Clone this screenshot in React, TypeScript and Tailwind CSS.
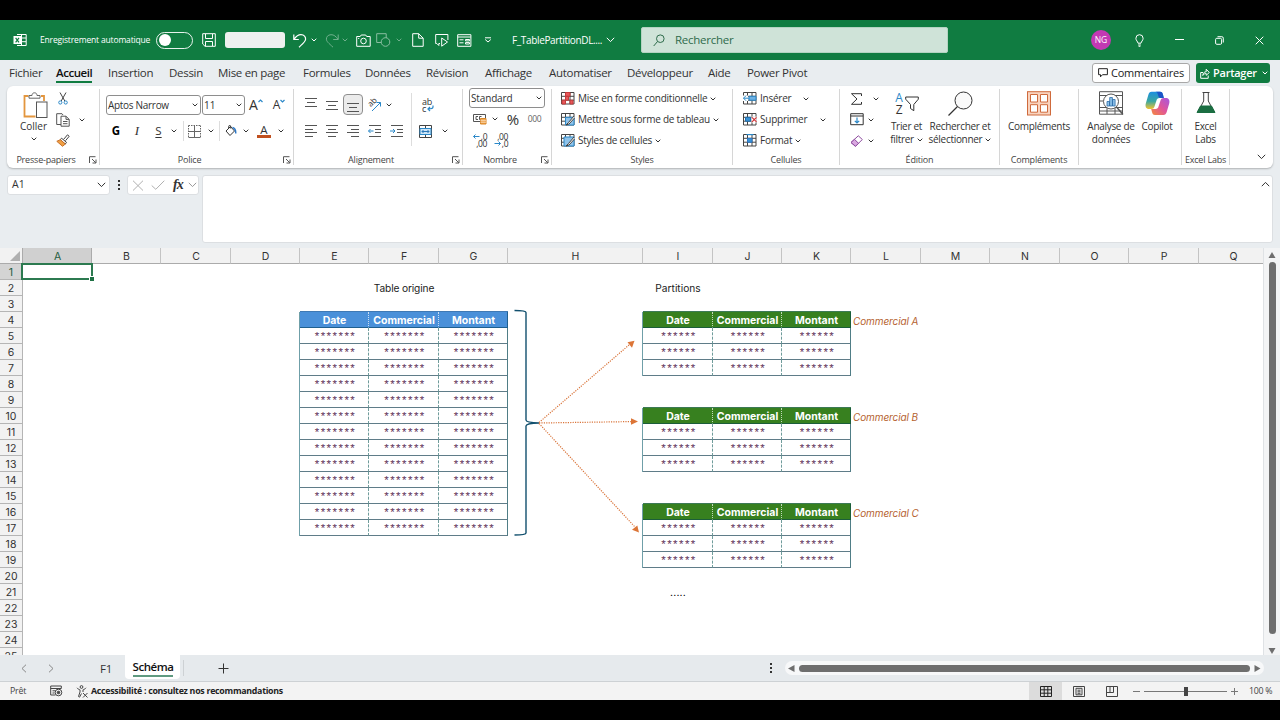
import React from 'react';
import clsx from 'clsx';

type IconProps = { w: number; h: number; className?: string; children: React.ReactNode };

const Icon = ({ w, h, className, children }: IconProps) => (
  <svg
    width={w}
    height={h}
    viewBox={`0 0 ${w} ${h}`}
    fill="none"
    stroke="currentColor"
    strokeWidth="1"
    className={clsx('block shrink-0', className)}
  >
    {children}
  </svg>
);

const Chevron = ({ className }: { className?: string }) => (
  <Icon w={6} h={4} className={className}>
    <path d="M0.7 0.7 3 3 5.3 0.7" />
  </Icon>
);

const BigChevron = ({ className }: { className?: string }) => (
  <Icon w={9} h={6} className={className}>
    <path d="M0.8 0.8 4.5 4.6 8.2 0.8" />
  </Icon>
);

const Slot = ({ className, children }: { className: string; children?: React.ReactNode }) => (
  <div className={clsx('flex shrink-0 items-center justify-center', className)}>{children}</div>
);

/* ---------- Title bar ---------- */

const TitleBar = () => (
  <header className="flex h-10 items-center bg-[#107c41] text-white">
    <Icon w={14} h={14} className="ml-[13px]">
      <path d="M4 1.5h9.2v11H4M8.5 1.5v11M4 5h9M4 8.7h9" />
      <rect x="0.5" y="3" width="7.5" height="8" fill="white" stroke="none" />
      <path d="M2.6 4.8 6 9.3M6 4.8 2.6 9.3" stroke="#107c41" strokeWidth="1.2" />
    </Icon>
    <span className="ml-[13px] w-[116px] pt-px text-[8.5px] tracking-[-0.16px] whitespace-nowrap">Enregistrement automatique</span>
    <div className="flex h-[17px] w-[37px] items-center rounded-full border border-white/90 pl-[2px]">
      <div className="size-[12px] rounded-full bg-white" />
    </div>
    <Icon w={14} h={14} className="ml-[9px]">
      <path d="M1 0.7h12.3v12.6H3L0.7 11V0.7zM3.5 1v4.5h7V1M3.5 13V8.5h7V13" />
    </Icon>
    <div className="ml-[9px] h-[16px] w-[60px] rounded-[3px] bg-[#eef0ef]" />
    <Icon w={14} h={15} className="ml-2">
      <path d="M0.8 1.5v5h5M1 6.3C3 3.5 5 1.6 8 1.7c3.2.1 4.7 2.3 4.6 4.5C12.5 8.5 10.5 10 6 14.2" strokeWidth="1.2" />
    </Icon>
    <Chevron className="ml-[4px]" />
    <Icon w={14} h={15} className="ml-[8px] opacity-40">
      <path d="M13.2 1.5v5h-5M13 6.3C11 3.5 9 1.6 6 1.7 2.8 1.8 1.3 4 1.4 6.2 1.5 8.5 3.5 10 8 14.2" />
    </Icon>
    <Chevron className="ml-[3px] opacity-40" />
    <Icon w={15} h={13} className="ml-[8px]">
      <path d="M0.7 2.5h3.5l1-1.5h4.5l1 1.5h3.5v9.8H0.7z" />
      <circle cx="7.5" cy="7" r="2.8" />
      <path d="M2.2 4.5h1" />
    </Icon>
    <Icon w={15} h={14} className="ml-[5px] opacity-50">
      <path d="M5 9.5H0.7V0.7h9.5V5" />
      <circle cx="9.5" cy="9" r="4.3" />
    </Icon>
    <Chevron className="ml-[5px] opacity-40" />
    <Icon w={12} h={14} className="ml-[10px]">
      <path d="M0.7 0.7h6l4.5 4.5v8.1H0.7zM6.7 0.7v4.5h4.5" />
    </Icon>
    <Icon w={14} h={14} className="ml-[11px]">
      <path d="M5 10.5H3.8v2L1.8 10.5H0.7V1.5h12.2V7" />
      <path d="M6.7 5v8.2L12.5 9z" />
    </Icon>
    <Icon w={15} h={13} className="ml-[8px]">
      <path d="M0.7 0.7h13.2v11.6H0.7zM0.7 3h13" />
      <path d="M2.5 5.8h4M2.5 8.8h4M8.5 5.5h4v1.4h-4zM8.5 8.6h4v1.4h-4z" />
    </Icon>
    <Icon w={8} h={6} className="ml-[12px]">
      <path d="M1 0.8h6M1.2 2.5 4 5l2.8-2.5" />
    </Icon>
    <span className="ml-[20px] w-[95px] text-[10px] tracking-[-0.35px] whitespace-nowrap">F_TablePartitionDL....</span>
    <BigChevron className="-ml-px" />
    <div className="ml-[26px] flex h-[26px] w-[307px] items-center rounded-[2px] border border-[#b4d3c1] bg-[#cfe3d8] text-[#2e6b4b]">
      <Icon w={12} h={13} className="ml-[11px]">
        <circle cx="7.3" cy="4.7" r="3.8" />
        <path d="M4.5 7.5 0.7 12" />
      </Icon>
      <span className="ml-[10px] text-[11.5px] tracking-[-0.25px]">Rechercher</span>
    </div>
    <div className="ml-[143px] flex size-5 items-center justify-center rounded-full bg-[#c239b3] text-[8.5px]">NG</div>
    <Icon w={9} h={13} className="ml-[24px]">
      <path d="M3 9.2C2.8 7.5 0.9 6.5 0.9 4.3a3.6 3.6 0 0 1 7.2 0c0 2.2-1.9 3.2-2.1 4.9zM3.2 11h2.6M3.6 12.3h1.8" />
    </Icon>
    <Icon w={9} h={2} className="ml-[31px]">
      <path d="M0 0.5h9" />
    </Icon>
    <Icon w={9} h={9} className="ml-[31px]">
      <rect x="0.6" y="2.3" width="6" height="6" rx="1.2" />
      <path d="M2.5 0.7h4.3a1.5 1.5 0 0 1 1.5 1.5v4.3" />
    </Icon>
    <Icon w={9} h={9} className="ml-[31px]">
      <path d="M0.7 0.7 8.3 8.3M8.3 0.7 0.7 8.3" />
    </Icon>
  </header>
);

/* ---------- Menu tabs ---------- */

const menuTabs = [
  { label: 'Fichier', width: 'w-[47px]' },
  { label: 'Accueil', width: 'w-[52px]', active: true },
  { label: 'Insertion', width: 'w-[61px]' },
  { label: 'Dessin', width: 'w-[49px]' },
  { label: 'Mise en page', width: 'w-[85px]' },
  { label: 'Formules', width: 'w-[62px]' },
  { label: 'Données', width: 'w-[61px]' },
  { label: 'Révision', width: 'w-[59px]' },
  { label: 'Affichage', width: 'w-[64px]' },
  { label: 'Automatiser', width: 'w-[78px]' },
  { label: 'Développeur', width: 'w-[81px]' },
  { label: 'Aide', width: 'w-[39px]' },
  { label: 'Power Pivot', width: 'w-[345px]' },
];

const MenuTabs = () => (
  <nav className="flex h-[26px] items-center pl-[9px] text-[11.5px] tracking-[-0.3px] text-[#333]">
    {menuTabs.map((t) => (
      <div key={t.label} className={clsx('shrink-0 whitespace-nowrap', t.width)}>
        <span
          className={clsx(
            'inline-block border-b-2 pt-px leading-[17px]',
            t.active ? 'border-[#107c41] font-semibold tracking-[-0.45px] text-[#111]' : 'border-transparent',
          )}
        >
          {t.label}
        </span>
      </div>
    ))}
    <button className="flex h-5 w-[98px] items-center justify-center gap-[3px] rounded-[3px] border border-[#a8a8a8] bg-white text-[11px] tracking-[-0.2px] text-[#222]">
      <Icon w={10} h={10}>
        <path d="M0.6 0.7h8.8v6H4.5L2.5 8.8V6.7H0.6z" />
      </Icon>
      Commentaires
    </button>
    <button className="ml-[6px] flex h-5 w-[74px] items-center rounded-[3px] bg-[#107c41] pl-1 text-[11px] font-semibold tracking-[-0.25px] text-white">
      <Icon w={10} h={11} className="mr-[3px]">
        <path d="M3 4.5H0.7v5.8h7.5V7.5M2.8 7.5C3 5 4.2 3.8 6.2 3.8V1.2L9.3 4.5 6.2 7.3V5.5C4.8 5.5 3.7 6 2.8 7.5z" />
      </Icon>
      Partager
      <Chevron className="ml-[5px]" />
    </button>
  </nav>
);

/* ---------- Ribbon ---------- */

const Launcher = () => (
  <Icon w={8} h={8} className="text-[#555]">
    <path d="M0.5 7V0.7h6M3 3l3.8 3.8M7 3.5V7H3.5" />
  </Icon>
);

type GroupProps = { label: string; width: string; launcher?: boolean; children: React.ReactNode };

const Group = ({ label, width, launcher, children }: GroupProps) => (
  <section className={clsx('flex shrink-0 flex-col pt-[2px]', width)}>
    <div className="flex h-[64px]">{children}</div>
    <div className="flex h-4 items-center">
      <span className="flex-1 text-center text-[9px] tracking-[-0.2px] whitespace-nowrap text-[#444]">{label}</span>
      {launcher && (
        <div className="w-[14px] pl-[4px]">
          <Launcher />
        </div>
      )}
    </div>
  </section>
);

const Sep = () => <div className="mt-[3px] h-[76px] w-px shrink-0 bg-[#d6d6d6]" />;

const Lines = ({ rows }: { rows: [number, number, number][] }) => (
  <Icon w={12} h={12} className="text-[#555]">
    {rows.map(([x1, x2, y]) => (
      <path key={y} d={`M${x1} ${y}H${x2}`} />
    ))}
  </Icon>
);

const Indent = ({ right }: { right?: boolean }) => (
  <Icon w={13} h={12} className="text-[#555]">
    <path d="M1 0.5h12M7 4.5h6M7 7.5h6M1 11.5h12" />
    {right ? <path d="M0 6h5M3 4l2 2-2 2" stroke="#2b88c8" /> : <path d="M0.5 6H5.5M2.5 4l-2 2 2 2" stroke="#2b88c8" />}
  </Icon>
);

const Combo = ({ className, children }: { className: string; children: React.ReactNode }) => (
  <div className={clsx('flex h-[20px] items-center justify-between rounded-[3px] border border-[#8e8e8e] bg-white pr-[2px] pl-px text-[10px] whitespace-nowrap', className)}>
    {children}
    <Chevron />
  </div>
);

const TableGlyph = ({ children }: { children?: React.ReactNode }) => (
  <Icon w={14} h={13} className="text-[#444]">
    <path d="M0.5 0.5h12.5v11.5H0.5zM0.5 4.3h12.5M0.5 8.2h12.5M4.5 0.5v11.5M9 0.5v11.5" />
    {children}
  </Icon>
);

const StyleRow = ({ icon, label, gap }: { icon: React.ReactNode; label: string; gap: string }) => (
  <div className="flex h-[21px] items-center text-[10px] tracking-[-0.24px] whitespace-nowrap">
    {icon}
    <span className="ml-[3px]">{label}</span>
    <Chevron className={gap} />
  </div>
);

const BigButton = ({ icon, lines, chevron, className }: { icon: React.ReactNode; lines: string[]; chevron?: boolean; className: string }) => (
  <div className={clsx('flex shrink-0 flex-col items-center pt-[3px] text-[10px] leading-[13px] tracking-[-0.3px] whitespace-nowrap', className)}>
    <div className="flex h-[29px] items-start">{icon}</div>
    {lines.map((line, i) => (
      <div key={line} className="flex items-center gap-[3px]">
        {line}
        {chevron && i === lines.length - 1 && <Chevron />}
      </div>
    ))}
  </div>
);

const Ribbon = () => (
  <div className="mx-[7px] flex h-[82px] rounded-[6px] bg-white text-[#333] shadow-[0_1px_2px_rgba(0,0,0,0.25)]">
    <Group label="Presse-papiers" width="w-[92px]" launcher>
      <div className="flex w-[53px] flex-col items-center pt-[4px] text-[10px]">
        <Icon w={25} h={27} className="ml-[4px]">
          <path d="M5.5 4H1.5v20.5h11M18 4h3v5" stroke="#e3963e" strokeWidth="1.8" />
          <path d="M6 6.2V3.5h3C9 1.8 10 0.8 11.5 0.8S14 1.8 14 3.5h3v2.7z" fill="white" stroke="#666" />
          <rect x="13.5" y="10" width="10.5" height="15.5" fill="white" stroke="#555" />
        </Icon>
        <span className="leading-[14px]">Coller</span>
        <Chevron className="mt-[4px]" />
      </div>
      <div>
        <div className="flex h-[21px] items-center">
          <Icon w={10} h={13} className="-ml-[2px]">
            <path d="M2 0.5 6.8 9M8 0.5 3.2 9" stroke="#444" />
            <circle cx="2.3" cy="10.5" r="1.6" stroke="#2b88c8" />
            <circle cx="7.7" cy="10.5" r="1.6" stroke="#2b88c8" />
          </Icon>
        </div>
        <div className="flex h-[21px] items-center">
          <Icon w={14} h={14} className="-ml-[4px] text-[#555]">
            <path d="M5 11.5H0.7V0.7H6L7 2" />
            <path d="M5 3.2h5l3.2 3.2v6.8H5zM10 3.2v3.2h3M7 8.5h4.5M7 10.7h4.5" />
          </Icon>
          <Chevron className="ml-[9px]" />
        </div>
        <div className="flex h-[21px] items-center">
          <Icon w={14} h={13} className="-ml-[4px]">
            <path d="M7.5 5.5 11.5 0.8l1.7 1.5L9.5 6.7" stroke="#444" />
            <path d="M5.5 4.2 10.5 8.3 9.3 10 4.3 5.7z" fill="white" stroke="#444" />
            <path d="M4.3 5.7 0.8 7.3 6.5 12.3 9.3 10z" fill="#f0a044" stroke="#c9722b" />
          </Icon>
        </div>
      </div>
    </Group>
    <Sep />

    <Group label="Police" width="w-[193px]" launcher>
      <div className="pt-[4px] pl-[6px]">
        <div className="flex h-[26px] items-center">
          <Combo className="w-[95px] tracking-[-0.3px]">Aptos Narrow</Combo>
          <Combo className="ml-px w-[43px]">11</Combo>
          <span className="ml-[4px] text-[14px] leading-none">A</span>
          <Icon w={5} h={4} className="-mt-[8px]"><path d="M0.5 3 2.5 1l2 2" stroke="#2b88c8" strokeWidth="1.2" /></Icon>
          <span className="ml-[10px] text-[12px] leading-none">A</span>
          <Icon w={5} h={4} className="-mt-[8px]"><path d="M0.5 1 2.5 3l2-2" stroke="#2b88c8" strokeWidth="1.2" /></Icon>
        </div>
        <div className="flex h-[26px] items-center text-[11.5px]">
          <Slot className="w-5 font-bold text-black">G</Slot>
          <Slot className="w-[22px] font-['Liberation_Serif',serif] text-[13px] italic">I</Slot>
          <Slot className="w-[21px]"><span className="underline underline-offset-2">S</span></Slot>
          <Slot className="w-[10px]"><Chevron /></Slot>
          <Slot className="w-2"><div className="h-5 w-px bg-[#ddd]" /></Slot>
          <Slot className="w-[15px]">
            <Icon w={13} h={13} className="text-[#666]">
              <path d="M0.5 0.5h12M0.5 0.5v12M12.5 0.5v12" strokeDasharray="1.5 1" />
              <path d="M6.5 0.5v12M0.5 6.5h12M0.5 12.5h12" />
            </Icon>
          </Slot>
          <Slot className="w-[17px]"><Chevron /></Slot>
          <div className="h-5 w-px bg-[#ddd]" />
          <Slot className="w-[22px]">
            <Icon w={12} h={12}>
              <path d="M5.5 1.5 1 6l4 4.5L9.5 6zM3.7 3.2V1.5a1 1 0 0 1 2 0v2" />
              <path d="M7.5 2.5c2 .5 3.3 1.5 3.3 5.5M9.5 4.5c1 .6 1.3 2 1.3 4" stroke="#2b78c8" strokeWidth="1.4" />
            </Icon>
          </Slot>
          <Slot className="w-2"><Chevron /></Slot>
          <Slot className="w-[28px]">
            <span className="border-b-[3px] border-[#c0501f] px-[3px] text-[11.5px] leading-[11px]">A</span>
          </Slot>
          <Slot className="w-[5px]"><Chevron /></Slot>
        </div>
      </div>
    </Group>
    <Sep />

    <Group label="Alignement" width="w-[168px]" launcher>
      <div className="w-[117px] pt-[3px] pl-[6px]">
        <div className="flex h-[27px] items-center">
          <Slot className="w-[21px] pb-[5px]"><Lines rows={[[0, 12, 2.5], [2, 10, 6.5], [0, 12, 10.5]]} /></Slot>
          <Slot className="w-[22px]"><Lines rows={[[0, 12, 2.5], [2, 10, 6.5], [0, 12, 10.5]]} /></Slot>
          <Slot className="h-[21px] w-5 rounded-[4px] border border-[#8e8e8e] bg-[#ebebeb] pt-[4px]">
            <Lines rows={[[0, 12, 2.5], [2, 10, 6.5], [0, 12, 10.5]]} />
          </Slot>
          <Slot className="w-[23px]">
            <div className="relative h-[14px] w-[14px]">
              <span className="absolute -top-px -left-px block -rotate-45 text-[8px] leading-[9px]">ab</span>
              <Icon w={14} h={14} className="absolute top-0 left-0 text-[#2b88c8]">
                <path d="M4 13 12.5 4.5M8.5 4.5h4v4" />
              </Icon>
            </div>
          </Slot>
          <Slot className="w-[6px]"><Chevron /></Slot>
        </div>
        <div className="flex h-[26px] items-center">
          <Slot className="w-[21px]"><Lines rows={[[0, 12, 0.5], [0, 8, 4.5], [0, 12, 7.5], [0, 8, 11.5]]} /></Slot>
          <Slot className="w-[22px]"><Lines rows={[[0, 12, 0.5], [2, 10, 4.5], [0, 12, 7.5], [2, 10, 11.5]]} /></Slot>
          <Slot className="w-[20px]"><Lines rows={[[0, 12, 0.5], [4, 12, 4.5], [0, 12, 7.5], [4, 12, 11.5]]} /></Slot>
          <Slot className="w-[23px]"><Indent /></Slot>
          <Slot className="w-[20px]"><Indent right /></Slot>
        </div>
      </div>
      <div className="mt-[5px] h-[53px] w-px bg-[#ddd]" />
      <div className="pt-[4px]">
        <div className="flex h-[26px] items-center">
          <Slot className="w-[30px]">
            <div className="relative text-[9px] leading-[6px] tracking-[-0.2px]">
              <div className="h-[6px]">ab</div>
              <div className="h-[7px] pt-px">c</div>
              <Icon w={7} h={7} className="absolute top-[6px] left-[5px] text-[#2b88c8]">
                <path d="M6 0.5v1.5C6 3.5 5 4 1 4M3 2 1 4l2 2" strokeWidth="1.2" />
              </Icon>
            </div>
          </Slot>
        </div>
        <div className="flex h-[26px] items-center">
          <Slot className="w-[27px]">
            <Icon w={13} h={13} className="text-[#444]">
              <path d="M0.5 0.5h12v12h-12zM6.5 0.5v3M6.5 9.5v3" />
              <path d="M1 3.5h11v6H1z" fill="#cfe6f7" stroke="#2b88c8" />
              <path d="M3 6.5h7M4.5 5 3 6.5 4.5 8M8.5 5 10 6.5 8.5 8" stroke="#2b78b8" />
            </Icon>
          </Slot>
          <Slot className="w-[12px]"><Chevron /></Slot>
        </div>
      </div>
    </Group>
    <Sep />

    <Group label="Nombre" width="w-[88px]" launcher>
      <div className="pl-[6px]">
        <Combo className="w-[76px] tracking-[-0.15px]">Standard</Combo>
        <div className="flex h-[22px] items-center">
          <Slot className="w-[21px]">
            <Icon w={14} h={12}>
              <path d="M0.5 1.5h12v7H0.5zM5 3.5H3v3h2M8.5 3.5h-2v3h2" stroke="#555" />
              <path d="M7.5 5.5h5.5v5.5H7.5z" fill="#f0a044" stroke="#d98628" />
              <path d="M7.5 7.3h5.5M7.5 9.2h5.5" stroke="#fff" strokeWidth="0.6" />
            </Icon>
          </Slot>
          <Slot className="w-[10px]"><Chevron /></Slot>
          <Slot className="w-[26px] text-[15px]">%</Slot>
          <Slot className="w-[17px] text-[8.5px] tracking-[-0.3px] text-[#666]">000</Slot>
        </div>
        <div className="flex h-[20px] items-center text-[8.5px] leading-[7px] tracking-[-0.4px]">
          <Slot className="w-[22px] flex-col">
            <span className="flex h-[6px] items-center">
              <Icon w={7} h={5} className="mr-px text-[#2b88c8]"><path d="M0.5 2.5h6M2.5 0.5l-2 2 2 2" /></Icon>,0
            </span>
            <span className="h-[7px] pl-[3px]">,00</span>
          </Slot>
          <Slot className="w-[20px] flex-col">
            <span className="h-[6px] pl-[3px] leading-[6px]">,00</span>
            <span className="flex h-[7px] items-center">
              <Icon w={7} h={5} className="mr-px text-[#2b88c8]"><path d="M0.5 2.5h6M4.5 0.5l2 2-2 2" /></Icon>,0
            </span>
          </Slot>
        </div>
      </div>
    </Group>
    <Sep />

    <Group label="Styles" width="w-[180px]">
      <div className="pl-[9px]">
        <StyleRow
          label="Mise en forme conditionnelle"
          gap="ml-[3px]"
          icon={
            <TableGlyph>
              <path d="M4.5 0.5H9v3.8H4.5zM1 8.2h3.5V12H1zM4.5 4.3h3v3.9h-3zM9 8.2h3V12H9z" fill="#e8575a" stroke="#c43c3c" />
            </TableGlyph>
          }
        />
        <StyleRow
          label="Mettre sous forme de tableau"
          gap="ml-[3px]"
          icon={
            <TableGlyph>
              <path d="M4.5 4.3H13V12H4.5z" fill="#8fc3ea" stroke="#2b88c8" />
              <path d="M13 3 7.5 9.5 5 12l3-1L13.5 5" fill="white" />
            </TableGlyph>
          }
        />
        <StyleRow
          label="Styles de cellules"
          gap="ml-[3px]"
          icon={
            <TableGlyph>
              <path d="M3 3h10v9H3z" fill="#8fc3ea" stroke="#2b88c8" />
              <path d="M13 3 7.5 9.5 5 12l3-1L13.5 5" fill="white" />
            </TableGlyph>
          }
        />
      </div>
    </Group>
    <Sep />

    <Group label="Cellules" width="w-[106px]">
      <div className="pl-[10px]">
        <StyleRow
          label="Insérer"
          gap="ml-[12px]"
          icon={
            <TableGlyph>
              <path d="M6 4.3h7v3.9H6z" fill="#6db1e4" stroke="#2b88c8" />
              <path d="M0 3.5h5v5.5H0z" fill="white" stroke="none" />
              <path d="M0.5 6.2H6M3 3.7.5 6.2 3 8.7" stroke="#2b88c8" />
            </TableGlyph>
          }
        />
        <StyleRow
          label="Supprimer"
          gap="ml-[13px]"
          icon={
            <TableGlyph>
              <path d="M8.5 3.5h5v6h-5z" fill="white" stroke="none" />
              <path d="M2.5 4.3h5v3.9h-5z" fill="#3b93d6" stroke="#1f6fb0" />
              <path d="m9 4.3 4.5 4.5M13.5 4.3 9 8.8" stroke="#d13438" strokeWidth="1.2" />
            </TableGlyph>
          }
        />
        <StyleRow
          label="Format"
          gap="ml-[3px]"
          icon={
            <TableGlyph>
              <path d="M4.5 4.3H9v3.9H4.5z" fill="#3b93d6" stroke="#2b78c8" />
              <path d="M3.5 0.5h7" stroke="#2b88c8" strokeWidth="1.4" />
            </TableGlyph>
          }
        />
      </div>
    </Group>
    <Sep />

    <Group label="Édition" width="w-[159px]">
      <div className="w-[45px] pl-[10px]">
        <div className="flex h-[21px] items-center">
          <Icon w={13} h={12}><path d="M11.5 3V0.7H1.5L7 6l-5.5 5.3h10V9" /></Icon>
          <Chevron className="ml-[10px]" />
        </div>
        <div className="flex h-[21px] items-center">
          <Icon w={14} h={13}>
            <path d="M0.7 0.7h12.5v11H0.7zM0.7 3h12.5" />
            <path d="M7 4.5v5.5M4.8 7.8 7 10l2.2-2.2" stroke="#2b88c8" strokeWidth="1.2" />
          </Icon>
          <Chevron className="ml-[4px]" />
        </div>
        <div className="flex h-[21px] items-center">
          <Icon w={13} h={12} className="text-[#8c4a9e]">
            <path d="M8.3 0.8 12.3 4.5 5.5 11.3 1 7.5z" fill="white" />
            <path d="M4.5 4.3 8.5 8.3 5.5 11.3 1 7.5z" fill="#d9a7e0" />
          </Icon>
          <Chevron className="ml-[5px]" />
        </div>
      </div>
      <BigButton
        className="w-[43px]"
        lines={['Trier et', 'filtrer']}
        chevron
        icon={
          <div className="flex items-center pt-px">
            <div className="w-[9px] text-center text-[12px] leading-[12px]">
              <div className="text-[#2b88c8]">A</div>
              <div>Z</div>
            </div>
            <Icon w={14} h={16} className="ml-px">
              <path d="M0.7 1h12.6v2.2L8.8 8.5v6.2L5.5 12.5v-4L0.7 3.2z" />
            </Icon>
          </div>
        }
      />
      <BigButton
        className="w-[64px]"
        lines={['Rechercher et', 'sélectionner']}
        chevron
        icon={
          <Icon w={26} h={26}>
            <circle cx="16.5" cy="9.5" r="8.5" fill="#fafafa" />
            <path d="M10.5 15.5 1.5 24.5" strokeWidth="1.2" />
          </Icon>
        }
      />
    </Group>
    <Sep />

    <Group label="Compléments" width="w-[78px]">
      <BigButton
        className="w-full"
        lines={['Compléments']}
        icon={
          <Icon w={24} h={25} className="text-[#cf6a3c]">
            <rect x="0.5" y="0.7" width="23" height="23.3" fill="#f9d3be" />
            <path d="M3.5 3.5h7v7.5h-7zM13.5 3.5h7v7.5h-7zM3.5 13.7h7v7.5h-7zM13.5 13.7h7v7.5h-7z" fill="white" />
          </Icon>
        }
      />
    </Group>
    <Sep />

    <Group label="" width="w-[102px]">
      <BigButton
        className="ml-2 w-12"
        lines={['Analyse de', 'données']}
        icon={
          <Icon w={25} h={25} className="text-[#555]">
            <path d="M0.5 0.7h23v22.5H0.5zM0.5 4.5h23M0.5 16.5h23M0.5 20h23M8 16v7M16 16v7M0.5 10h4" />
            <circle cx="12" cy="10.5" r="7.5" fill="white" />
            <path d="M17.5 16 24 23.5" strokeWidth="1.4" />
            <path d="M8 10.5h2.5v4.5H8zM10.7 6.5h2.7V15h-2.7zM13.6 8.5h2.5V15h-2.5z" fill="#8fc3ea" stroke="#2b6ca8" strokeWidth="0.8" />
          </Icon>
        }
      />
      <BigButton
        className="ml-[6px] w-8"
        lines={['Copilot']}
        icon={
          <svg width="25" height="25" viewBox="0 0 25 25">
            <defs>
              <linearGradient id="cpA" x1="0" y1="0" x2="0" y2="1">
                <stop offset="0" stopColor="#1b8fe0" />
                <stop offset="0.55" stopColor="#3aa7a0" />
                <stop offset="1" stopColor="#f2c230" />
              </linearGradient>
              <linearGradient id="cpB" x1="1" y1="0" x2="0" y2="1">
                <stop offset="0" stopColor="#a557e0" />
                <stop offset="0.5" stopColor="#e0559a" />
                <stop offset="1" stopColor="#f58a3c" />
              </linearGradient>
            </defs>
            <path d="M6.5 0.8H15c2 0 2.5 1.3 3 3L18.8 7H14.5c-1.8 0-2.6 1-3.1 2.7L9.5 15.5c-.5 1.7-1.5 2.5-3.2 2.5H4C1 18 0 15.5 0.8 12.5L3.3 4C4 2 4.8 0.8 6.5 0.8z" fill="url(#cpA)" />
            <path d="M10.5 0.8H15c2 0 2.5 1.3 3 3L18.8 7h-3.3c-1.5 0-2-1.2-2.5-3-.4-1.7-1-3.2-2.5-3.2z" fill="#1b55c8" />
            <path d="M18.5 24H10c-2 0-2.5-1.3-3-3l-.8-3h4.3c1.8 0 2.6-1 3.1-2.7L15.5 9.5C16 7.8 17 7 18.7 7H21c3 0 4 2.5 3.2 5.5L21.7 21c-.7 2-1.5 3-3.2 3z" fill="url(#cpB)" />
          </svg>
        }
      />
    </Group>
    <Sep />

    <Group label="Excel Labs" width="w-[47px]">
      <BigButton
        className="w-full"
        lines={['Excel', 'Labs']}
        icon={
          <Icon w={20} h={24} className="text-[#444]">
            <path d="M6.5 1.5h7M7.7 1.5v8.5L1.5 21.5h17L12.3 10V1.5" />
            <path d="M4.5 15h11l3.5 6.5H1z" fill="#1b6e42" stroke="#1b6e42" />
          </Icon>
        }
      />
    </Group>
    <Sep />
    <div className="flex flex-1 items-end justify-end pr-[7px] pb-[8px]">
      <BigChevron />
    </div>
  </div>
);

/* ---------- Formula bar ---------- */

const FormulaBar = () => (
  <div className="flex h-[80px] items-start pt-[7px] pl-[7px] text-[#333]">
    <div className="flex h-5 w-[103px] items-center justify-between rounded-[3px] border border-[#dcdfe2] bg-white pr-[3px] pl-1 text-[10.5px]">
      A1
      <BigChevron />
    </div>
    <div className="flex h-5 w-[17px] flex-col items-center justify-center gap-[2px]">
      <i className="size-[2px] bg-[#333]" />
      <i className="size-[2px] bg-[#333]" />
      <i className="size-[2px] bg-[#333]" />
    </div>
    <div className="flex h-5 w-[72px] items-center rounded-[3px] border border-[#dcdfe2] bg-white pl-1">
      <Icon w={12} h={11} className="text-[#b0b0b0]"><path d="M1 0.7 11 10.5M11 0.7 1 10.5" /></Icon>
      <Icon w={14} h={10} className="ml-[7px] text-[#b0b0b0]"><path d="M0.7 5.5 4.8 9.3 13.3 0.7" /></Icon>
      <span className="ml-[8px] w-[14px] font-['Liberation_Serif',serif] text-[14px] leading-none font-bold tracking-[-0.8px] italic">fx</span>
      <BigChevron className="ml-px text-[#999]" />
    </div>
    <div className="ml-[3px] flex h-[68px] w-[1071px] items-start justify-end rounded-[3px] border border-[#dcdfe2] bg-white pt-[5px] pr-[2px]">
      <BigChevron className="rotate-180" />
    </div>
  </div>
);

/* ---------- Sheet ---------- */

const columns = [
  { id: 'A', width: 'w-[69px]' },
  { id: 'B', width: 'w-[69px]' },
  { id: 'C', width: 'w-[70px]' },
  { id: 'D', width: 'w-[69px]' },
  { id: 'E', width: 'w-[69px]' },
  { id: 'F', width: 'w-[70px]' },
  { id: 'G', width: 'w-[69px]' },
  { id: 'H', width: 'w-[135px]' },
  { id: 'I', width: 'w-[70px]' },
  { id: 'J', width: 'w-[69px]' },
  { id: 'K', width: 'w-[69px]' },
  { id: 'L', width: 'w-[70px]' },
  { id: 'M', width: 'w-[69px]' },
  { id: 'N', width: 'w-[70px]' },
  { id: 'O', width: 'w-[69px]' },
  { id: 'P', width: 'w-[70px]' },
  { id: 'Q', width: 'w-[69px]' },
];

const rows = Array.from({ length: 25 }, (_, i) => i + 1);
const headers = ['Date', 'Commercial', 'Montant'];
const partitions = [
  { row: 4, name: 'Commercial A' },
  { row: 10, name: 'Commercial B' },
  { row: 16, name: 'Commercial C' },
];

const cellClass = (first: boolean, last: boolean, head: boolean, headColor: string, headLine: string) =>
  clsx(
    'justify-center border-b border-r',
    head ? clsx(headColor, headLine, 'pt-[2px] pl-px font-bold text-white') : 'border-b-[#5f7c88] text-[#6d4168]',
    head && !last && 'border-r-white/70 [border-right-style:dotted]',
    !head && (last ? 'border-r-[#4f7d86]' : 'border-r-[#6f9c9b] [border-right-style:dashed]'),
    first && 'shadow-[-1px_0_0_#6f9fa8]',
  );

const Stars = ({ n }: { n: number }) => (
  <span className="translate-y-px pl-[3px] font-['Liberation_Sans',sans-serif] text-[11.5px] tracking-[1.45px] text-[#5f3159]">{'*'.repeat(n)}</span>
);

const getCell = (col: string, row: number): { cls: string; content?: React.ReactNode } => {
  const left = ['E', 'F', 'G'].indexOf(col);
  if (left >= 0) {
    if (row === 3) return { cls: 'border-b border-[#3f79b4]' };
    if (row >= 4 && row <= 17) {
      return {
        cls: cellClass(left === 0, left === 2, row === 4, 'bg-[#4a90d9]', 'border-[#1f5f8f]'),
        content: row === 4 ? headers[left] : <Stars n={7} />,
      };
    }
  }
  const right = ['I', 'J', 'K'].indexOf(col);
  if (right >= 0) {
    if (partitions.some((p) => p.row - 1 === row)) return { cls: 'border-b border-[#3c7a55]' };
    const p = partitions.find((x) => row >= x.row && row <= x.row + 3);
    if (p) {
      return {
        cls: cellClass(right === 0, right === 2, row === p.row, 'bg-[#37801f]', 'border-[#1b5e3a]'),
        content: row === p.row ? headers[right] : <Stars n={6} />,
      };
    }
  }
  if (col === 'L') {
    const p = partitions.find((x) => x.row === row);
    if (p) return { cls: 'pl-[2px] pt-[2px] italic tracking-[-0.1px] text-[10px] text-[#b5622f]', content: p.name };
  }
  if (col === 'F' && row === 2) return { cls: 'justify-center pt-px text-[10.2px] tracking-[-0.15px] text-[#222]', content: 'Table origine' };
  if (col === 'I' && row === 2) return { cls: 'justify-center pt-px text-[10.2px] text-[#222]', content: 'Partitions' };
  if (col === 'I' && row === 21) return { cls: 'justify-center tracking-[0.15px]', content: '.....' };
  return { cls: '' };
};

const Drawing = () => (
  <svg className="absolute top-0 left-0" width="1263" height="391" viewBox="0 264 1263 391" fill="none">
    <path d="M514.5 310.5c8 0 11.5.5 11.5 2V420c0 2 4 2.8 13 3-9 .2-13 1-13 3V533c0 1.5-3.5 2-11.5 2" stroke="#12506e" strokeWidth="1.4" />
    <g stroke="#d9743a" strokeDasharray="1.2 1.2" strokeWidth="1.2">
      <path d="M539 422.5 629 345" />
      <path d="M539 423 631 421.6" />
      <path d="M539 423.5 634.5 526.5" />
    </g>
    <g fill="#dc7537">
      <path d="M634.5 340.7 627.5 342.2 632 347.7z" />
      <path d="M638 421.5 631 418.3V424.7z" />
      <path d="M639 532.5 637.3 525.5 632 529.8z" />
    </g>
  </svg>
);

const Sheet = () => (
  <div className="flex h-[407px] font-['Inter',sans-serif] text-[10.5px]">
    <div className="w-[1263px] overflow-hidden bg-white">
      <div className="flex h-4 bg-[#f2f2f2] text-[10.5px] text-[#333]">
        <div className="flex w-[23px] shrink-0 items-end justify-end border-r border-b border-[#ababab] pr-[2px] pb-[2px]">
          <svg width="10" height="10"><path d="M10 0v10H0z" fill="#b0b0b0" /></svg>
        </div>
        {columns.map((c) => (
          <div
            key={c.id}
            className={clsx(
              'flex shrink-0 items-center justify-center border-r border-b pt-[2px] pl-px',
              c.width,
              c.id === 'A' ? 'border-r-[#ababab] border-b-[#1f6b45] bg-[#d0d0d0] text-[#1f5c3d]' : 'border-r-[#c4c4c4] border-b-[#ababab]',
            )}
          >
            {c.id}
          </div>
        ))}
      </div>
      <div className="relative">
        {rows.map((r) => (
          <div key={r} className="flex h-4">
            <div
              className={clsx(
                'flex w-[23px] shrink-0 items-center justify-center border-r border-b border-[#b5b5b5] pt-[2px] text-[10.5px]',
                r === 1 ? 'bg-[#d4d4d4] text-[#1f5c3d]' : 'bg-[#f2f2f2] text-[#333]',
              )}
            >
              {r}
            </div>
            {columns.map((c) => {
              const cell = getCell(c.id, r);
              return (
                <div key={c.id} className={clsx('flex shrink-0 items-center leading-[15px] whitespace-nowrap', c.width, cell.cls)}>
                  {cell.content}
                </div>
              );
            })}
          </div>
        ))}
        <Drawing />
        <div className="absolute -top-px left-[21px] h-[17px] w-[72px] border-2 border-[#2c7a50]">
          <i className="absolute -right-[3px] -bottom-[3px] size-[4px] bg-[#1f7145] outline outline-white" />
        </div>
      </div>
    </div>
    <div className="flex w-[17px] flex-col items-center border-l border-[#dfe2e5] bg-[#f3f4f5] text-[#6e6e6e]">
      <svg width="8" height="6" className="mt-[4px]"><path d="M4 0 7.5 6h-7z" fill="currentColor" /></svg>
      <div className="mt-[4px] h-[372px] w-[7px] rounded-full bg-[#6e6e6e]" />
      <svg width="8" height="6" className="mt-[14px]"><path d="M4 6 7.5 0h-7z" fill="currentColor" /></svg>
    </div>
  </div>
);

/* ---------- Sheet tabs and status bar ---------- */

const SheetTabs = () => (
  <div className="flex h-[27px] items-center border-b border-[#cdd1d4] bg-[#e6eaed] text-[11.5px] text-[#333]">
    <Icon w={6} h={9} className="ml-[21px] text-[#888]"><path d="M5 0.7 1 4.5l4 3.8" /></Icon>
    <Icon w={6} h={9} className="ml-[21px] text-[#888]"><path d="M1 0.7l4 3.8-4 3.8" /></Icon>
    <span className="ml-[46px] w-[25px] pt-px tracking-[-0.3px]">F1</span>
    <div className="flex h-[24px] w-[55px] items-start justify-center self-start rounded-b-[4px] bg-white pl-px">
      <span className="border-b-2 border-[#5f9a80] pt-[4px] leading-[16px] font-semibold tracking-[-0.45px] text-[#111]">Schéma</span>
    </div>
    <div className="ml-[3px] h-4 w-px bg-[#cdd1d4]" />
    <Icon w={11} h={11} className="ml-[34px]"><path d="M5.5 0.5v10M0.5 5.5h10" /></Icon>
    <div className="ml-[541px] flex flex-col gap-[2px]">
      <i className="size-[2px] bg-[#333]" />
      <i className="size-[2px] bg-[#333]" />
      <i className="size-[2px] bg-[#333]" />
    </div>
    <div className="ml-[13px] flex h-[14px] w-[479px] items-center justify-between rounded-full bg-[#f7f8f9] px-[3px] text-[#6e6e6e]">
      <svg width="7" height="7"><path d="M0 3.5 6.5 0v7z" fill="currentColor" /></svg>
      <div className="h-[7px] w-[451px] rounded-full bg-[#6e6e6e]" />
      <svg width="7" height="7"><path d="M6.5 3.5 0.5 0v7z" fill="currentColor" /></svg>
    </div>
  </div>
);

const StatusBar = () => (
  <footer className="flex h-[18px] items-center bg-[#f3f3f3] text-[8.8px] text-[#444]">
    <span className="ml-[10px] w-[40px] pt-px tracking-[-0.2px]">Prêt</span>
    <Icon w={13} h={12}>
      <path d="M5.5 10H0.7V1h10.6v2.5M0.7 3.5h10.6M2.5 5.8h3M2.5 8h2" />
      <circle cx="8.5" cy="7.5" r="3.3" />
      <circle cx="8.5" cy="7.5" r="1.3" fill="currentColor" />
    </Icon>
    <Icon w={13} h={13} className="ml-[13px]">
      <circle cx="5.5" cy="2" r="1.4" />
      <path d="M1 2.8c1 1.5 2.5 1.8 3 2v2.2L2.5 11.5l1 .7 2-3.7M10 2.8c-1 1.5-2.5 1.8-3 2v2.2M7 8l4.5 4.5M11.5 8 7 12.5" />
    </Icon>
    <span className="ml-[2px] w-[938px] pt-px font-bold tracking-[-0.27px] text-[#222]">Accessibilité : consultez nos recommandations</span>
    <Slot className="h-full w-[33px] bg-[#dcdcdc]">
      <Icon w={12} h={11} className="text-[#222]">
        <path d="M0.5 0.5h11v10H0.5zM0.5 3.8h11M0.5 7.2h11M4.2 0.5v10M7.8 0.5v10" />
      </Icon>
    </Slot>
    <Slot className="w-[33px]">
      <Icon w={12} h={11}>
        <path d="M0.5 0.5h11v10H0.5zM3 2.3h6v6.5H3zM4.5 4.2h3M4.5 5.8h3M4.5 7.3h3" />
      </Icon>
    </Slot>
    <Slot className="w-[33px]">
      <Icon w={12} h={11}>
        <path d="M0.5 0.5h11v10H0.5zM4 0.5v6M7.5 0.5v6M0.5 6.5h7" />
      </Icon>
    </Slot>
    <Icon w={7} h={7} className="ml-[5px] text-[#777]"><path d="M0 3.5h7" /></Icon>
    <div className="ml-[4px] flex h-[9px] w-[83px] items-center justify-center bg-[linear-gradient(#777,#777)] bg-[length:100%_1px] bg-center bg-no-repeat">
      <div className="h-[9px] w-[4px] bg-[#444]" />
    </div>
    <Icon w={7} h={7} className="ml-[4px] text-[#777]"><path d="M0 3.5h7M3.5 0v7" /></Icon>
    <span className="ml-[11px] pt-[2px] tracking-[-0.3px] whitespace-nowrap">100 %</span>
  </footer>
);

const App: React.FC = () => {
  return (
    <div className="flex h-[720px] w-[1280px] flex-col overflow-hidden bg-black py-5 font-['Open_Sans','Noto_Sans',sans-serif]">
      <TitleBar />
      <div className="bg-[#e9edf0]">
        <MenuTabs />
        <Ribbon />
        <FormulaBar />
      </div>
      <Sheet />
      <SheetTabs />
      <StatusBar />
    </div>
  );
};

export default App;
